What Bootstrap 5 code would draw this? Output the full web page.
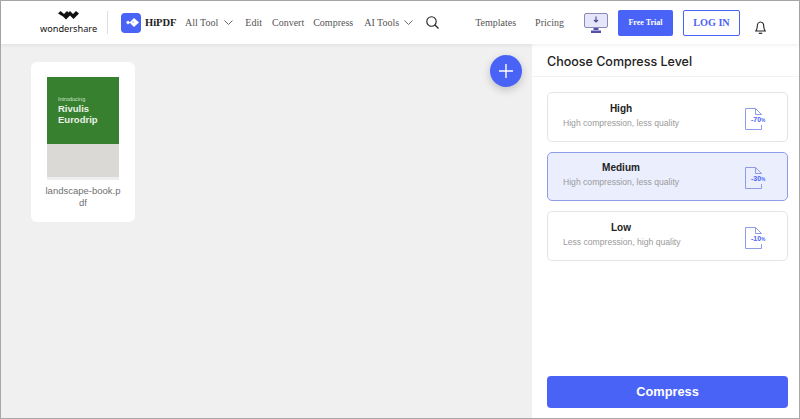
<!DOCTYPE html>
<html lang="en">
<head>
  <meta charset="UTF-8" />
  <meta name="viewport" content="width=device-width, initial-scale=1" />
  <title>HiPDF Compress</title>
  <link href="https://cdn.jsdelivr.net/npm/bootstrap@5.3.0/dist/css/bootstrap.min.css" rel="stylesheet" />
  <style>
    html, body { height: 100%; }
    body {
      font-family: "Liberation Sans", Arial, sans-serif;
      background: #f0f0f0;
      overflow: hidden;
    }
    .page-frame {
      height: 419px;
      border: 1px solid #a8a8a8;
    }
    .top-bar {
      height: 43px;
      background: #fff;
      padding-left: 39px;
      box-shadow: 0 1px 4px rgba(0, 0, 0, .08);
      position: relative;
      z-index: 2;
      font-family: "Liberation Serif", serif;
      font-size: 10px;
      color: #555;
    }
    .ws-logo { width: 57px; }
    .ws-name {
      font-family: "Noto Sans", sans-serif;
      font-size: 9.2px;
      line-height: 12px;
      margin-top: 2px;
      color: #111;
    }
    .logo-split { width: 1px; height: 23px; background: #ddd; margin: 0 13px 0 10px; }
    .hi-tile {
      width: 20px; height: 20px;
      background: #4a63f7;
      border-radius: 4px;
      margin-right: 4px;
    }
    .hi-name { width: 30px; font-weight: 700; font-size: 10.5px; color: #222; margin-right: 10px; }
    .nav-text { white-space: nowrap; }
    .gap-edit { margin-right: 10px; }
    .gap-convert { margin-right: 9px; }
    .gap-compress { margin-right: 11px; }
    .gap-templates { margin-right: 19px; }
    .chev-first { margin: 0 12px 0 6px; }
    .chev-second { margin: 0 13px 0 5px; }
    .search-icon { margin-right: 36px; }
    .monitor-icon { margin: 0 10px 0 20px; }
    .bell-icon { margin: 10px 0 0 15px; }
    .btn-trial {
      width: 55px; height: 26px;
      background: #4a63f7;
      color: #fff;
      border-radius: 2px;
      font-size: 8px;
      font-weight: 700;
      margin-right: 10px;
    }
    .btn-login {
      width: 57px; height: 26px;
      border: 1px solid #4a63f7;
      color: #4a63f7;
      border-radius: 2px;
      font-size: 10.2px;
      font-weight: 700;
    }
    .work-area { height: 374px; position: relative; }
    .file-zone { width: 531px; padding: 18px 0 0 30px; }
    .file-tile {
      width: 104px; height: 160px;
      background: #fff;
      border-radius: 6px;
      padding: 15px 16px 0;
      text-align: center;
      font-size: 9.5px;
      line-height: 12px;
      color: #707070;
    }
    .cover {
      height: 103px;
      background: #dad9d5;
      border-bottom: 3px solid #eee;
      margin-bottom: 5px;
    }
    .cover-green {
      height: 67px;
      background: #37802f;
      color: #e9f2e6;
      text-align: left;
      padding: 18px 0 0 11px;
      font-size: 9.5px;
      font-weight: 700;
      line-height: 11px;
    }
    .cover-small { font-size: 5.5px; font-weight: 400; line-height: 8px; color: #cfe3cb; }
    .name-break { margin: 0 -3px; word-break: break-all; }
    .fab-add {
      position: absolute;
      left: 489px; top: 11px;
      width: 32px; height: 32px;
      border-radius: 50%;
      background: #4a63f7;
      box-shadow: 0 3px 8px rgba(0, 0, 0, .2);
    }
    .side-panel { width: 267px; background: #fff; }
    .side-title {
      height: 33px;
      padding: 9px 0 0 15px;
      font-family: "Inter", sans-serif;
      font-size: 12.5px;
      line-height: 18px;
      font-weight: 500;
      color: #222;
      border-bottom: 1px solid #f2f2f2;
    }
    .level-list { padding: 15px 11px 0 15px; gap: 10px; }
    .level-item {
      height: 49.5px;
      border: 1px solid #e4e4e4;
      border-radius: 5px;
      padding-left: 15px;
      padding-right: 20px;
    }
    .level-item.picked { background: #ebeefd; border-color: #8f9be6; }
    .level-text { width: 116px; text-align: center; padding-bottom: 3px; }
    .level-name { font-size: 10px; font-weight: 700; color: #222; line-height: 13px; margin-bottom: 2px; }
    .level-hint { font-size: 8.6px; color: #9a9a9a; line-height: 12px; white-space: nowrap; }
    .btn-compress {
      margin: auto 11px 10px 15px;
      height: 32px;
      background: #4a63f7;
      color: #fff;
      border-radius: 4px;
      font-size: 12.8px;
      font-weight: 700;
    }
    .pct-icon { position: relative; width: 22px; height: 22px; }
    .pct-label {
      position: absolute;
      left: 6px; top: 9px;
      font-size: 7px;
      line-height: 9px;
      font-weight: 700;
      color: #4a63f7;
      background: #fff;
      white-space: nowrap;
    }
    .picked .pct-label { background: #ebeefd; }
    .pct-sign { font-size: 4.5px; }
  </style>
</head>
<body>
  <div class="page-frame d-flex flex-column">

    <!-- Header -->
    <div class="top-bar d-flex align-items-center">
      <div class="ws-logo text-center">
        <svg width="21" height="10" viewBox="0 0 21 10" class="d-block mx-auto"><path fill="#111" d="M0 2.500 2.500 0 6 3 9 0l1.500 1.500L12 0l3 3 3-3 3 2.500L15.500 8 12 4.500 8 8.500 5 5.500z"/></svg>
        <div class="ws-name">wondershare</div>
      </div>
      <div class="logo-split"></div>
      <div class="hi-tile d-flex align-items-center justify-content-center">
        <svg width="15" height="9" viewBox="0 0 15 9"><path fill="#fff" d="M10 0l5 4.500L10 9 5.500 4.500zM4 2.500l2 2-2 2-2-2z"/><path fill="#4a63f7" d="M8.500 3.500h1v1h-1z"/></svg>
      </div>
      <span class="hi-name">HiPDF</span>
      <span class="nav-text">All Tool</span>
      <svg class="chev-first" width="9" height="5" viewBox="0 0 9 5"><path fill="none" stroke="#666" d="m.5.500 4 4 4-4"/></svg>
      <span class="nav-text gap-edit">Edit</span>
      <span class="nav-text gap-convert">Convert</span>
      <span class="nav-text gap-compress">Compress</span>
      <span class="nav-text">AI Tools</span>
      <svg class="chev-second" width="9" height="5" viewBox="0 0 9 5"><path fill="none" stroke="#666" d="m.5.500 4 4 4-4"/></svg>
      <svg class="search-icon" width="13" height="13" viewBox="0 0 13 13"><circle cx="5.500" cy="5.500" r="4.700" fill="none" stroke="#222" stroke-width="1.100"/><path stroke="#222" stroke-width="1.200" d="m9 9 3.500 3.500"/></svg>
      <span class="nav-text gap-templates">Templates</span>
      <span class="nav-text">Pricing</span>
      <svg class="monitor-icon" width="24" height="20" viewBox="0 0 24 20"><rect x=".5" y=".5" width="23" height="14" rx="1.500" fill="#e6e5fa" stroke="#8a8ab8"/><path stroke="#4a4890" stroke-width="1.100" fill="none" d="M12 3.500v5.500M10 7l2 2 2-2"/><path fill="#5250a8" d="M9.500 15h5v2h-5zM7 17.500h10V20H7z"/></svg>
      <div class="btn-trial d-flex align-items-center justify-content-center">Free Trial</div>
      <div class="btn-login d-flex align-items-center justify-content-center">LOG IN</div>
      <svg class="bell-icon" width="11" height="13" viewBox="0 0 11 13"><path fill="none" stroke="#222" stroke-width="1.100" d="M.8 10c1-1 1.400-2 1.400-4.200C2.200 3 3.600 1 5.500 1s3.300 2 3.300 4.800c0 2.200.4 3.200 1.400 4.200z"/><path stroke="#222" stroke-width="1.200" d="M3.800 12.300h3.400"/></svg>
    </div>

    <div class="work-area d-flex">
      <!-- File area -->
      <div class="file-zone">
        <div class="file-tile">
          <div class="cover">
            <div class="cover-green">
              <div class="cover-small">Introducing</div>
              Rivulis<br />Eurodrip
            </div>
          </div>
          <div class="name-break">landscape-book.pdf</div>
        </div>
      </div>
      <div class="fab-add d-flex align-items-center justify-content-center">
        <svg width="14" height="14" viewBox="0 0 14 14"><path stroke="#fff" stroke-width="1.400" d="M7 0v14M0 7h14"/></svg>
      </div>

      <!-- Options panel -->
      <div class="side-panel d-flex flex-column">
        <div class="side-title">Choose Compress Level</div>
        <div class="level-list d-flex flex-column">
          <div class="level-item d-flex align-items-center justify-content-between">
            <div class="level-text">
              <div class="level-name">High</div>
              <div class="level-hint">High compression, less quality</div>
            </div>
            <div class="pct-icon">
              <svg width="17" height="22" viewBox="0 0 17 22"><path fill="none" stroke="#8f9be6" d="M.5.500h10l6 6v15H.5z"/><path fill="none" stroke="#8f9be6" d="M10.500.500v6h6"/></svg>
              <span class="pct-label">-70<span class="pct-sign">%</span></span>
            </div>
          </div>
          <div class="level-item picked d-flex align-items-center justify-content-between">
            <div class="level-text">
              <div class="level-name">Medium</div>
              <div class="level-hint">High compression, less quality</div>
            </div>
            <div class="pct-icon">
              <svg width="17" height="22" viewBox="0 0 17 22"><path fill="none" stroke="#8f9be6" d="M.5.500h10l6 6v15H.5z"/><path fill="none" stroke="#8f9be6" d="M10.500.500v6h6"/></svg>
              <span class="pct-label">-30<span class="pct-sign">%</span></span>
            </div>
          </div>
          <div class="level-item d-flex align-items-center justify-content-between">
            <div class="level-text">
              <div class="level-name">Low</div>
              <div class="level-hint">Less compression, high quality</div>
            </div>
            <div class="pct-icon">
              <svg width="17" height="22" viewBox="0 0 17 22"><path fill="none" stroke="#8f9be6" d="M.5.500h10l6 6v15H.5z"/><path fill="none" stroke="#8f9be6" d="M10.500.500v6h6"/></svg>
              <span class="pct-label">-10<span class="pct-sign">%</span></span>
            </div>
          </div>
        </div>
        <div class="btn-compress d-flex align-items-center justify-content-center">Compress</div>
      </div>
    </div>
  </div>
  <script src="https://cdn.jsdelivr.net/npm/bootstrap@5.3.0/dist/js/bootstrap.bundle.min.js"></script>
</body>
</html>
